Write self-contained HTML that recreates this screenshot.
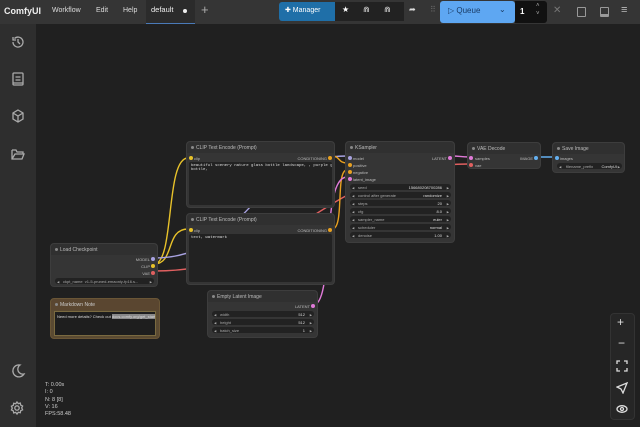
<!DOCTYPE html>
<html><head><meta charset="utf-8"><style>
*{box-sizing:border-box;margin:0;padding:0}
body{width:640px;height:427px;overflow:hidden;background:#202020;font-family:"Liberation Sans",sans-serif;color:#ddd;position:relative}
.top{position:absolute;left:0;top:0;width:640px;height:24px;background:#353535}
.side{position:absolute;left:0;top:24px;width:36px;height:403px;background:#2e2e2e}
.t{position:absolute;white-space:nowrap}
.node{position:absolute;background:#353535;border-radius:4px;border:1px solid #3d3d3d}
.hdr{height:11px;background:#303030;border-radius:4px 4px 0 0;font-size:5px;color:#bbb;padding:3px 0 0 9px;position:relative;white-space:nowrap}
.hdr:before{content:"";position:absolute;left:4px;top:4px;width:3px;height:3px;border-radius:50%;background:#888}
.s{position:absolute;font-size:4px;color:#bbb;white-space:nowrap}
.dot{position:absolute;width:4px;height:4px;border-radius:50%}
.w{position:absolute;height:6px;background:#222;border-radius:3px;font-size:4px;color:#aaa;padding:1px 6px 0 8px;white-space:nowrap;overflow:hidden}
.w:before{content:"◀";position:absolute;left:2px;font-size:3px;top:1.5px}
.w:after{content:"▶";position:absolute;right:2px;font-size:3px;top:1.5px}
.w b{position:absolute;right:9px;font-weight:normal;color:#ddd}
.ta{position:absolute;background:#222;font-family:"Liberation Mono",monospace;font-size:4px;color:#ddd;padding:2px;border-radius:2px;white-space:nowrap;overflow:hidden}
.ic{position:absolute;stroke:#aaa;fill:none;stroke-width:1.3}
</style></head><body>
<div class="top"></div>
<div class="t" style="left:4px;top:6px;font-size:9px;font-weight:bold;color:#eee">ComfyUI</div>
<div class="t" style="left:52px;top:7px;font-size:7px;color:#ddd">Workflow</div>
<div class="t" style="left:96px;top:7px;font-size:7px;color:#ddd">Edit</div>
<div class="t" style="left:123px;top:7px;font-size:7px;color:#ddd">Help</div>
<div style="position:absolute;left:146px;top:0;width:49px;height:24px;background:#2b2b2b;border-bottom:1px solid #4a7ab8"></div>
<div class="t" style="left:151px;top:5px;font-size:7.5px;color:#eee">default</div>
<div style="position:absolute;left:183px;top:9px;width:4px;height:4px;border-radius:50%;background:#eee"></div>
<div class="t" style="left:201px;top:2px;font-size:13px;color:#aaa">+</div>
<div style="position:absolute;left:279px;top:2px;width:56px;height:19px;background:#1f6fa8;border-radius:3px 0 0 3px"></div>
<div class="t" style="left:285px;top:6px;font-size:7px;color:#fff">✚ Manager</div>
<div style="position:absolute;left:335px;top:2px;width:69px;height:19px;background:#222"></div>
<div class="t" style="left:342px;top:5px;font-size:8px;color:#fff">★</div>
<div class="t" style="left:363px;top:5px;font-size:8px;color:#ddd">⋒</div>
<div class="t" style="left:384px;top:5px;font-size:8px;color:#ddd">⋒</div>
<div class="t" style="left:409px;top:5px;font-size:8px;color:#ddd">➦</div>
<div class="t" style="left:430px;top:5px;font-size:8px;color:#666">⠿</div>
<div style="position:absolute;left:440px;top:1px;width:75px;height:22px;background:#5ea7f2;border-radius:3px"></div>
<div class="t" style="left:448px;top:6px;font-size:8px;color:#1a3c66">▷ Queue</div>
<div class="t" style="left:499px;top:5px;font-size:8px;color:#1a3c66">⌄</div>
<div style="position:absolute;left:515px;top:1px;width:32px;height:22px;background:#111;border-radius:0 3px 3px 0"></div>
<div class="t" style="left:520px;top:7px;font-size:8px;color:#fff;font-weight:bold">1</div>
<div class="t" style="left:536px;top:2px;font-size:6px;color:#aaa;line-height:8px">˄<br>˅</div>
<div class="t" style="left:553px;top:5px;font-size:10px;color:#777">✕</div>
<div style="position:absolute;left:577px;top:7px;width:9px;height:10px;border:1.3px solid #999;border-radius:1px"></div>
<div style="position:absolute;left:600px;top:7px;width:9px;height:10px;border:1.3px solid #999;border-radius:1px;border-bottom-width:3px"></div>
<div class="t" style="left:621px;top:4px;font-size:11px;color:#bbb">≡</div>
<div class="side"></div>
<svg class="ic" style="left:10px;top:34px" width="16" height="16" viewBox="0 0 16 16"><path d="M3 8a5 5 0 1 0 1.5-3.5M3 3v3h3M8 5v3l2 2"/></svg>
<svg class="ic" style="left:11px;top:71px" width="14" height="16" viewBox="0 0 14 16"><rect x="2" y="2" width="10" height="12" rx="1"/><path d="M4.5 6h5M4.5 9h5M2 12h10"/></svg>
<svg class="ic" style="left:10px;top:108px" width="16" height="16" viewBox="0 0 16 16"><path d="M8 2l5 3v6l-5 3-5-3V5zM3 5l5 3 5-3M8 8v6"/></svg>
<svg class="ic" style="left:10px;top:146px" width="16" height="16" viewBox="0 0 16 16"><path d="M2 4h4l1 2h6v2M2 4v9h10l2-5H5l-3 5"/></svg>
<svg class="ic" style="left:10px;top:363px" width="16" height="16" viewBox="0 0 16 16"><path d="M10 2a6 6 0 1 0 4 9 5 5 0 0 1-4-9z"/></svg>
<svg class="ic" style="left:9px;top:400px" width="16" height="16" viewBox="0 0 16 16"><circle cx="8" cy="8" r="2.2"/><path d="M8 2l1.3 1.6 2-.5.4 2 1.9.9-.9 1.9.9 1.9-1.9.9-.4 2-2-.5L8 14l-1.3-1.6-2 .5-.4-2-1.9-.9.9-1.9-.9-1.9 1.9-.9.4-2 2 .5z"/></svg>
<div class="t" style="left:45px;top:382px;font-size:5.5px;color:#ccc;line-height:7.3px">T: 0.00s<br>I: 0<br>N: 8 [8]<br>V: 16<br>FPS:58.48</div>
<div style="position:absolute;left:610px;top:313px;width:25px;height:107px;background:#262626;border:1px solid #333;border-radius:4px"></div>
<div class="t" style="left:617px;top:315px;font-size:12px;color:#ddd">+</div>
<div class="t" style="left:618px;top:336px;font-size:12px;color:#ddd">−</div>
<svg class="ic" style="left:616px;top:360px;stroke:#ddd" width="12" height="12" viewBox="0 0 12 12"><path d="M1 4V1h3M8 1h3v3M11 8v3H8M4 11H1V8"/></svg>
<svg class="ic" style="left:616px;top:382px;stroke:#ddd" width="12" height="12" viewBox="0 0 12 12"><path d="M11 1L1 5l4 2 2 4z"/></svg>
<svg class="ic" style="left:616px;top:404px;stroke:#ddd" width="12" height="10" viewBox="0 0 12 10"><ellipse cx="6" cy="5" rx="5" ry="3.3"/><circle cx="6" cy="5" r="1.5"/></svg>
<svg style="position:absolute;left:0;top:0" width="640" height="427">
<g fill="none" stroke-width="1.4">
<path d="M154 264 C175 264 165 158 188 158" stroke="#e8c22a"/>
<path d="M154 264 C175 264 165 229 188 229" stroke="#e8c22a"/>
<path d="M154 258 C250 258 250 156 347 156" stroke="#a8a2e0"/>
<path d="M154 271 C300 271 320 164 469 164" stroke="#e06060"/>
<path d="M332 156 C340 156 338 163 347 163" stroke="#e8a020"/>
<path d="M332 229 C345 229 335 170 347 170" stroke="#e8a020"/>
<path d="M313 305 C335 305 320 177 347 177" stroke="#e07ad8"/>
<path d="M452 156 C460 156 460 157 469 157" stroke="#e07ad8"/>
<path d="M538 157 C545 157 545 157 556 157" stroke="#64b0f0"/>
</g></svg>
<div class="node" style="left:186px;top:141px;width:149px;height:67px"><div class="hdr">CLIP Text Encode (Prompt)</div>
<div class="s" style="left:7px;top:14px">clip</div><div class="dot" style="left:2px;top:14px;background:#e8c22a"></div>
<div class="s" style="right:7px;top:14px">CONDITIONING</div><div class="dot" style="right:2px;top:14px;background:#e8a020"></div>
<div class="ta" style="left:2px;top:20px;width:143px;height:43px">beautiful scenery nature glass bottle landscape, , purple galaxy<br>bottle,</div></div>
<div class="node" style="left:186px;top:213px;width:149px;height:72px"><div class="hdr">CLIP Text Encode (Prompt)</div>
<div class="s" style="left:7px;top:14px">clip</div><div class="dot" style="left:2px;top:14px;background:#e8c22a"></div>
<div class="s" style="right:7px;top:14px">CONDITIONING</div><div class="dot" style="right:2px;top:14px;background:#e8a020"></div>
<div class="ta" style="left:2px;top:20px;width:143px;height:48px">text, watermark</div></div>
<div class="node" style="left:345px;top:141px;width:110px;height:102px"><div class="hdr">KSampler</div>
<div class="s" style="left:7px;top:14px">model</div><div class="dot" style="left:2px;top:14px;background:#a8a2e0"></div>
<div class="s" style="left:7px;top:21px">positive</div><div class="dot" style="left:2px;top:21px;background:#e8a020"></div>
<div class="s" style="left:7px;top:28px">negative</div><div class="dot" style="left:2px;top:28px;background:#e8a020"></div>
<div class="s" style="left:7px;top:35px">latent_image</div><div class="dot" style="left:2px;top:35px;background:#e07ad8"></div>
<div class="s" style="right:7px;top:14px">LATENT</div><div class="dot" style="right:2px;top:14px;background:#e07ad8"></div>
<div class="w" style="left:4px;top:42px;width:101px">seed<b>156680208700286</b></div>
<div class="w" style="left:4px;top:50px;width:101px">control after generate<b>randomize</b></div>
<div class="w" style="left:4px;top:58px;width:101px">steps<b>20</b></div>
<div class="w" style="left:4px;top:66px;width:101px">cfg<b>8.0</b></div>
<div class="w" style="left:4px;top:74px;width:101px">sampler_name<b>euler</b></div>
<div class="w" style="left:4px;top:82px;width:101px">scheduler<b>normal</b></div>
<div class="w" style="left:4px;top:90px;width:101px">denoise<b>1.00</b></div></div>
<div class="node" style="left:467px;top:142px;width:74px;height:27px"><div class="hdr">VAE Decode</div>
<div class="s" style="left:7px;top:13px">samples</div><div class="dot" style="left:1px;top:13px;background:#e07ad8"></div>
<div class="s" style="left:7px;top:20px">vae</div><div class="dot" style="left:1px;top:20px;background:#e06060"></div>
<div class="s" style="right:7px;top:13px">IMAGE</div><div class="dot" style="right:2px;top:13px;background:#64b0f0"></div></div>
<div class="node" style="left:552px;top:142px;width:73px;height:31px"><div class="hdr">Save Image</div>
<div class="s" style="left:7px;top:13px">images</div><div class="dot" style="left:2px;top:13px;background:#64b0f0"></div>
<div class="w" style="left:4px;top:20px;width:65px;padding-left:9px">filename_prefix<b style="right:5px">ComfyUI</b></div></div>
<div class="node" style="left:50px;top:243px;width:108px;height:44px"><div class="hdr">Load Checkpoint</div>
<div class="s" style="right:7px;top:13px">MODEL</div><div class="dot" style="right:2px;top:13px;background:#a8a2e0"></div>
<div class="s" style="right:7px;top:20px">CLIP</div><div class="dot" style="right:2px;top:20px;background:#e8c22a"></div>
<div class="s" style="right:7px;top:27px">VAE</div><div class="dot" style="right:2px;top:27px;background:#e06060"></div>
<div class="w" style="left:4px;top:34px;width:99px">ckpt_name&nbsp; v1-5-pruned-emaonly-fp16.s...</div></div>
<div class="node" style="left:50px;top:298px;width:110px;height:41px;background:#5a4a32;border-color:#6a5636"><div class="hdr" style="background:#5a4630;color:#ccc">Markdown Note</div>
<div style="position:absolute;left:3px;top:12px;width:102px;height:25px;background:#1e1e1e;border:1px solid #7a6a40;font-size:4px;color:#ddd;padding:2px;white-space:nowrap;overflow:hidden">Need more details? Check out <span style="background:#888">docs.comfy.org/get_started</span></div></div>
<div class="node" style="left:207px;top:290px;width:111px;height:48px"><div class="hdr">Empty Latent Image</div>
<div class="s" style="right:7px;top:13px">LATENT</div><div class="dot" style="right:2px;top:13px;background:#e07ad8"></div>
<div class="w" style="left:4px;top:20px;width:102px">width<b>512</b></div>
<div class="w" style="left:4px;top:28px;width:102px">height<b>512</b></div>
<div class="w" style="left:4px;top:36px;width:102px">batch_size<b>1</b></div></div>
</body></html>
